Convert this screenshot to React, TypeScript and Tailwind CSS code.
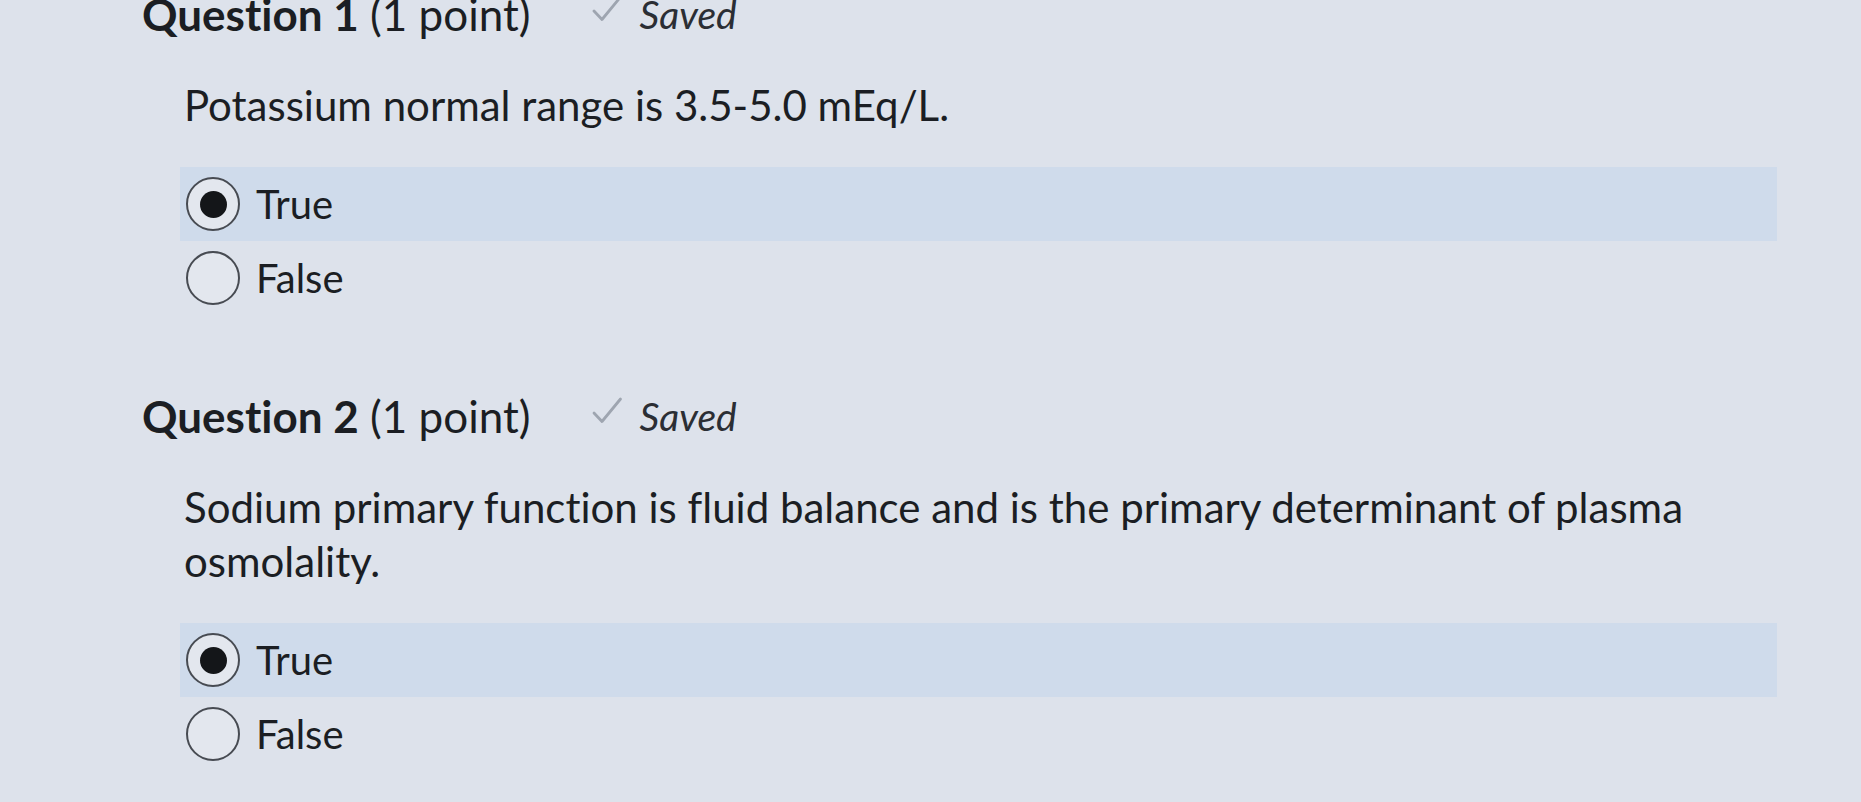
type Option = { label: string; selected: boolean };

type Question = {
  number: number;
  points: number;
  text: string;
  options: Option[];
};

const questions: Question[] = [
  {
    number: 1,
    points: 1,
    text: "Potassium normal range is 3.5-5.0 mEq/L.",
    options: [
      { label: "True", selected: true },
      { label: "False", selected: false },
    ],
  },
  {
    number: 2,
    points: 1,
    text: "Sodium primary function is fluid balance and is the primary determinant of plasma osmolality.",
    options: [
      { label: "True", selected: true },
      { label: "False", selected: false },
    ],
  },
];

function SavedTick() {
  return (
    <svg viewBox="0 0 32 30" className="h-[30px] w-[32px] -translate-y-[5px] self-center">
      <path
        d="M3 17 L11 25.5 L29.5 3"
        fill="none"
        stroke="#9ea5b0"
        strokeWidth="2.8"
        strokeLinecap="round"
        strokeLinejoin="round"
      />
    </svg>
  );
}

function Radio({ selected }: { selected: boolean }) {
  return (
    <span className="flex h-[54px] w-[54px] shrink-0 items-center justify-center rounded-full border-2 border-[#474b52] bg-[#e3e7ee]">
      {selected && <span className="h-[27px] w-[27px] rounded-full bg-[#141619]" />}
    </span>
  );
}

function QuestionBlock({ q }: { q: Question }) {
  return (
    <section className="flex flex-col">
      <div className="flex h-[52px] items-center">
        <h2 className="text-[44px] leading-[52px]">
          <span className="font-bold">Question {q.number}</span>{" "}
          <span>({q.points} point)</span>
        </h2>
        <span className="ml-[60px] flex items-center gap-[17px]">
          <SavedTick />
          <span className="text-[39px] italic leading-[52px] text-[#2b2e34]">Saved</span>
        </span>
      </div>
      <p className="mt-[38px] w-[1602px] pl-[42px] text-[42px] leading-[54px]">{q.text}</p>
      <div className="mt-[35px] ml-[38px] flex w-[1597px] flex-col">
        {q.options.map((o) => (
          <label
            key={o.label}
            className={`flex h-[74px] items-center gap-[16px] pl-[6px] text-[40px] ${
              o.selected ? "bg-[#cfdbeb]" : ""
            }`}
          >
            <Radio selected={o.selected} />
            <span>{o.label}</span>
          </label>
        ))}
      </div>
    </section>
  );
}

export default function App() {
  return (
    <div className="h-[802px] overflow-hidden bg-[#dde2eb] pl-[142px] font-['Lato',sans-serif] text-[#1b1e23] [font-variant-ligatures:none]">
      <div className="-mt-[12px] flex flex-col gap-[75px]">
        {questions.map((q) => (
          <QuestionBlock key={q.number} q={q} />
        ))}
      </div>
    </div>
  );
}
